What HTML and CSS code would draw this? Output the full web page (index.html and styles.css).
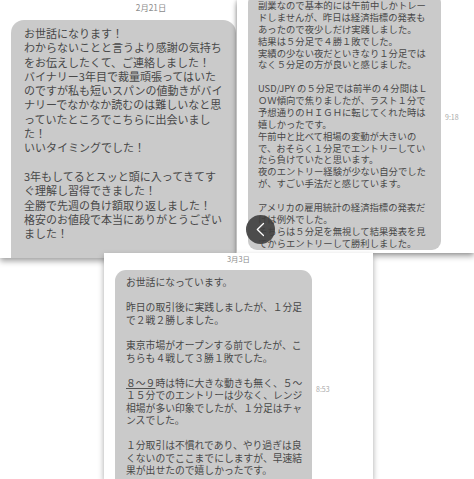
FILE: index.html
```html
<!DOCTYPE html>
<html lang="ja">
<head>
<meta charset="utf-8">
<title>LINE</title>
<link rel="stylesheet" href="styles.css">
</head>
<body>
<section class="shot shot-a">
  <div class="date date-a">2月21日</div>
  <div class="bubble bubble-a">お世話になります！<br>わからないことと言うより感謝の気持ち<br>をお伝えしたくて、ご連絡しました！<br>バイナリー3年目で裁量頑張ってはいた<br>のですが私も短いスパンの値動きがバイ<br>ナリーでなかなか読むのは難しいなと思<br>っていたところでこちらに出会いまし<br>た！<br>いいタイミングでした！<br><br>3年もしてるとスッと頭に入ってきてす<br>ぐ理解し習得できました！<br>全勝で先週の負け額取り返しました！<br>格安のお値段で本当にありがとうござい<br>ました！</div>
</section>

<section class="shot shot-b">
  <div class="row">
    <div class="bubble bubble-b">副業なので基本的には午前中しかトレー<br>ドしませんが、昨日は経済指標の発表も<br>あったので夜少しだけ実践しました。<br>結果は５分足で４勝１敗でした。<br>実績の少ない夜だといきなり１分足では<br>なく５分足の方が良いと感じました。<br><br>USD/JPY の５分足では前半の４分間はＬ<br>ＯＷ傾向で焦りましたが、ラスト１分で<br>予想通りのＨＩＧＨに転じてくれた時は<br>嬉しかったです。<br>午前中と比べて相場の変動が大きいの<br>で、おそらく１分足でエントリーしてい<br>たら負けていたと思います。<br>夜のエントリー経験が少ない自分でした<br>が、すごい手法だと感じています。<br><br>アメリカの雇用統計の経済指標の発表だ<br>けは例外でした。<br>そちらは５分足を無視して結果発表を見<br>てからエントリーして勝利しました。</div>
    <div class="time time-b">9:18</div>
  </div>
</section>

<section class="shot shot-c">
  <div class="date date-c">3月3日</div>
  <div class="row">
    <div class="bubble bubble-c">お世話になっています。<br><br>昨日の取引後に実践しましたが、１分足<br>で２戦２勝しました。<br><br>東京市場がオープンする前でしたが、こ<br>ちらも４戦して３勝１敗でした。<br><br><span class="link">８～９</span>時は特に大きな動きも無く、５～<br>１５分でのエントリーは少なく、レンジ<br>相場が多い印象でしたが、１分足はチャ<br>ンスでした。<br><br>１分取引は不慣れであり、やり過ぎは良<br>くないのでここまでにしますが、早速結<br>果が出せたので嬉しかったです。</div>
    <div class="time time-c">8:53</div>
  </div>
</section>

<div class="back-btn">
  <svg width="29" height="29" viewBox="0 0 29 29"><path d="M17.5 8.5 L11.3 14.5 L17.5 20.5" fill="none" stroke="#fff" stroke-width="1.3" stroke-linecap="round" stroke-linejoin="round"/></svg>
</div>
</body>
</html>
```

FILE: styles.css
```css
* { box-sizing: border-box; margin: 0; padding: 0; }

body {
  width: 474px;
  height: 479px;
  position: relative;
  overflow: hidden;
  background: #ffffff;
  font-family: "Noto Sans CJK JP", "Noto Sans", sans-serif;
  color: #484848;
}

.shot {
  position: absolute;
  background: #ffffff;
  overflow: hidden;
}

.shot-a {
  left: 0;
  top: 0;
  width: 237px;
  height: 258px;
  z-index: 1;
  box-shadow: 0 3px 6px rgba(0, 0, 0, 0.38);
}

.shot-b {
  left: 237px;
  top: 0;
  width: 237px;
  height: 253px;
  z-index: 2;
  box-shadow: 0 3px 6px rgba(0, 0, 0, 0.38), -1px 0 3px rgba(0, 0, 0, 0.15);
}

.shot-c {
  left: 104px;
  top: 253px;
  width: 269px;
  height: 226px;
  z-index: 3;
  box-shadow: 0 3px 6px rgba(0, 0, 0, 0.35);
}

.date {
  color: #8c8c8c;
  text-align: center;
  white-space: nowrap;
}

.date-a {
  font-size: 8.3px;
  line-height: 14px;
  padding-left: 65px;
  margin-bottom: 6px;
}

.date-c {
  font-size: 7.4px;
  line-height: 12px;
  margin-bottom: 5px;
}

.row {
  display: flex;
  align-items: flex-start;
}

.bubble {
  background: #cacaca;
  white-space: nowrap;
  flex: none;
}

.bubble-a {
  margin-left: 11px;
  width: 225px;
  border-radius: 13px 13px 0 0;
  padding: 6px 0 30px 13px;
  font-size: 11px;
  line-height: 14.3px;
}

.bubble-b {
  margin-left: 11px;
  margin-top: -6px;
  width: 193px;
  border-radius: 9px;
  padding: 6px 0 1px 10px;
  font-size: 9.33px;
  line-height: 11.88px;
}

.bubble-c {
  margin-left: 11px;
  width: 197px;
  border-radius: 11px 11px 0 0;
  padding: 6.4px 0 20px 11px;
  font-size: 9.8px;
  line-height: 12.53px;
}

.link {
  text-decoration: underline;
  text-decoration-color: #555;
  text-underline-offset: 1px;
}

.time {
  color: #a8a8a8;
  font-size: 7px;
  line-height: 8px;
  margin-left: 4px;
  white-space: nowrap;
}

.time-b { margin-top: 113px; }

.time-c { margin-top: 115px; }

.back-btn {
  position: absolute;
  left: 246px;
  top: 215px;
  width: 29px;
  height: 29px;
  border-radius: 50%;
  background: rgba(62, 62, 62, 0.9);
  z-index: 4;
  display: flex;
}
```
